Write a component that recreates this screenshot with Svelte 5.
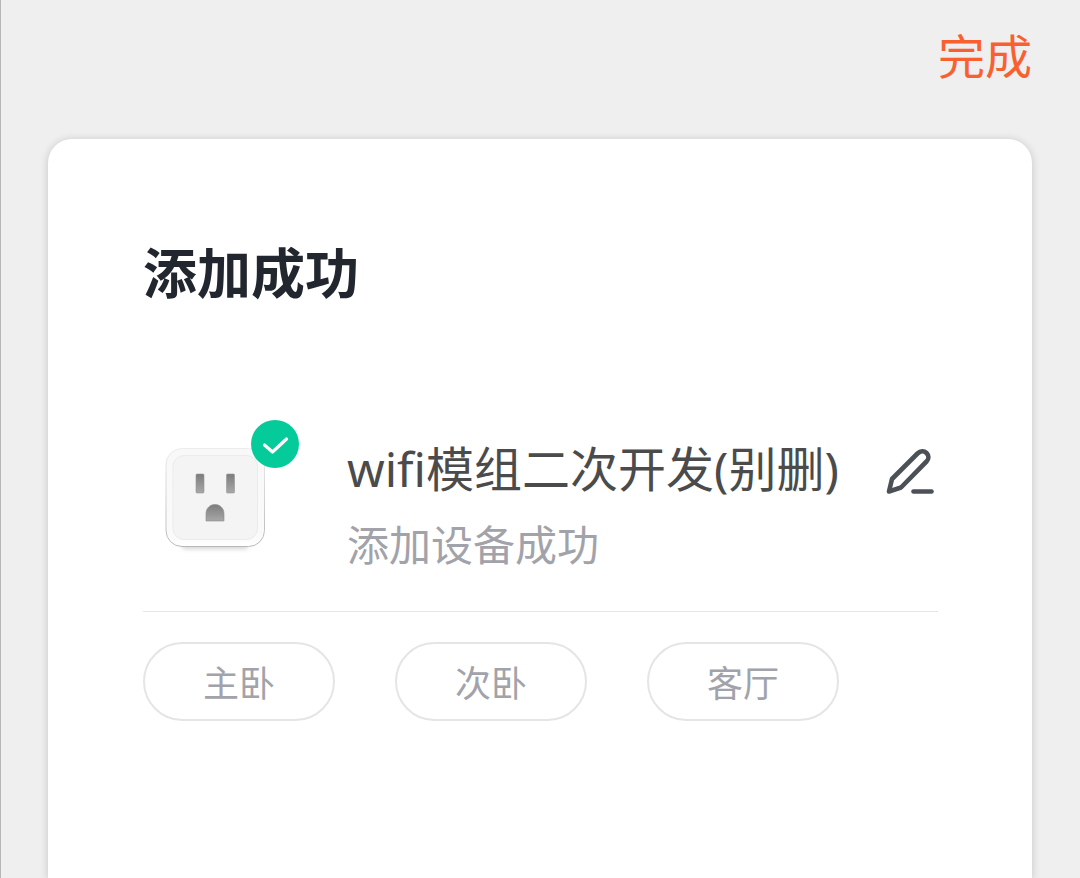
<script>
  const rooms = ['主卧', '次卧', '客厅'];
  let selected = $state('');
</script>

<div class="page">
  <header>
    <button class="done" type="button">完成</button>
  </header>

  <main class="card">
    <h1>添加成功</h1>

    <section class="device">
      <svg class="socket" viewBox="0 0 144 144" role="img" aria-label="插座">
        <defs>
          <linearGradient id="shell" x1="0" y1="0" x2="0" y2="1">
            <stop offset="0" stop-color="#f8f8f8" />
            <stop offset="0.9" stop-color="#fafafa" />
            <stop offset="1" stop-color="#ffffff" />
          </linearGradient>
          <linearGradient id="rim" x1="0" y1="0" x2="0" y2="1">
            <stop offset="0" stop-color="#ececec" />
            <stop offset="0.5" stop-color="#d4d4d4" />
            <stop offset="1" stop-color="#b8b8b8" />
          </linearGradient>
          <linearGradient id="slot" x1="0" y1="0" x2="0" y2="1">
            <stop offset="0" stop-color="#7c7c7c" />
            <stop offset="1" stop-color="#a8a8a8" />
          </linearGradient>
          <filter id="soft" x="-20%" y="-100%" width="140%" height="300%">
            <feGaussianBlur stdDeviation="2" />
          </filter>
        </defs>
        <rect x="36" y="122" width="66" height="7" rx="3" fill="#d4d4d4" filter="url(#soft)" />
        <rect x="20" y="28.5" width="98.5" height="98" rx="16" fill="url(#shell)" stroke="url(#rim)" />
        <rect x="27" y="35.5" width="84.5" height="84" rx="11" fill="#f4f4f4" stroke="#ebebeb" />
        <rect x="50" y="54" width="8" height="19" rx="1" fill="url(#slot)" stroke="#969696" stroke-width="0.6" />
        <rect x="80.5" y="54" width="8" height="19" rx="1" fill="url(#slot)" stroke="#969696" stroke-width="0.6" />
        <path d="M60 101V94C60 88 64 84.500 69 84.500S78 88 78 94V101Z" fill="url(#slot)" stroke="#8c8c8c" stroke-width="0.6" />
        <circle cx="129" cy="24" r="24" fill="#05cb9b" />
        <path d="M118.500 25L126.500 32L140.500 19" fill="none" stroke="#fff" stroke-width="3.200" stroke-linecap="round" stroke-linejoin="round" />
      </svg>

      <div class="info">
        <h2>wifi模组二次开发(别删)</h2>
        <p>添加设备成功</p>
      </div>

      <button class="edit" type="button" aria-label="编辑名称">
        <svg viewBox="0 0 48 48" aria-hidden="true">
          <path d="M3 43.500L6 31L31.500 5.500C34.500 2.500 38 2.500 40.500 5C43 7.500 43 11 40.500 13.500L15 39.500Z" fill="none" stroke="#4b5156" stroke-width="4.600" stroke-linejoin="round" />
          <path d="M27.500 43.500H45.500" stroke="#4b5156" stroke-width="4.600" stroke-linecap="round" />
        </svg>
      </button>
    </section>

    <div class="rooms">
      {#each rooms as room}
        <button
          type="button"
          class:active={selected === room}
          aria-pressed={selected === room}
          onclick={() => (selected = room)}>{room}</button>
      {/each}
    </div>
  </main>
</div>

<style>
  :global(body) {
    background: #efefef;
  }

  .page {
    box-sizing: border-box;
    display: flex;
    flex-direction: column;
    min-height: 100vh;
    padding: 0 48px 0 47px;
    border-left: 1px solid #b6b6b6;
    font-family: "Noto Sans", "Noto Sans CJK SC", sans-serif;
  }

  button {
    padding: 0;
    border: 0;
    background: none;
    font-family: inherit;
    cursor: pointer;
  }

  header {
    display: flex;
    justify-content: flex-end;
    flex: none;
    padding: 26px 0 53px;
  }

  .done {
    color: #f9602f;
    font-size: 47px;
    line-height: 60px;
  }

  .card {
    flex: 1;
    padding: 96px 94px 96px 95px;
    border-radius: 24px 24px 0 0;
    background: #fff;
    box-shadow: 0 1px 8px rgba(0, 0, 0, 0.18);
  }

  h1,
  h2,
  p {
    margin: 0;
  }

  h1 {
    color: #22262e;
    font-size: 54px;
    font-weight: 700;
    line-height: 76px;
  }

  .device {
    display: flex;
    align-items: flex-start;
    margin-top: 108px;
    padding-bottom: 36px;
    border-bottom: 1px solid #e5e5e5;
  }

  .socket {
    flex: none;
    width: 144px;
    height: 144px;
    margin: 1px 0 0 3px;
    overflow: visible;
  }

  .info {
    flex: 1;
    min-width: 0;
    margin: 16px 0 0 57px;
  }

  h2 {
    color: #4b4b4b;
    font-size: 48px;
    font-weight: 400;
    line-height: 68px;
    white-space: nowrap;
  }

  p {
    margin-top: 12px;
    color: #a2a3aa;
    font-size: 42px;
    line-height: 60px;
  }

  .edit {
    flex: none;
    width: 48px;
    height: 48px;
    margin: 29px 4px 0 0;
  }

  .edit svg {
    display: block;
  }

  .rooms {
    display: flex;
    flex-wrap: wrap;
    gap: 24px 60px;
    margin-top: 30px;
  }

  .rooms button {
    box-sizing: border-box;
    width: 192px;
    height: 79px;
    padding-top: 4px;
    border: 2px solid #e5e5e5;
    border-radius: 40px;
    color: #a2a3aa;
    font-size: 36px;
    line-height: 48px;
  }

  .rooms button.active {
    border-color: #f9602f;
    color: #f9602f;
  }
</style>
